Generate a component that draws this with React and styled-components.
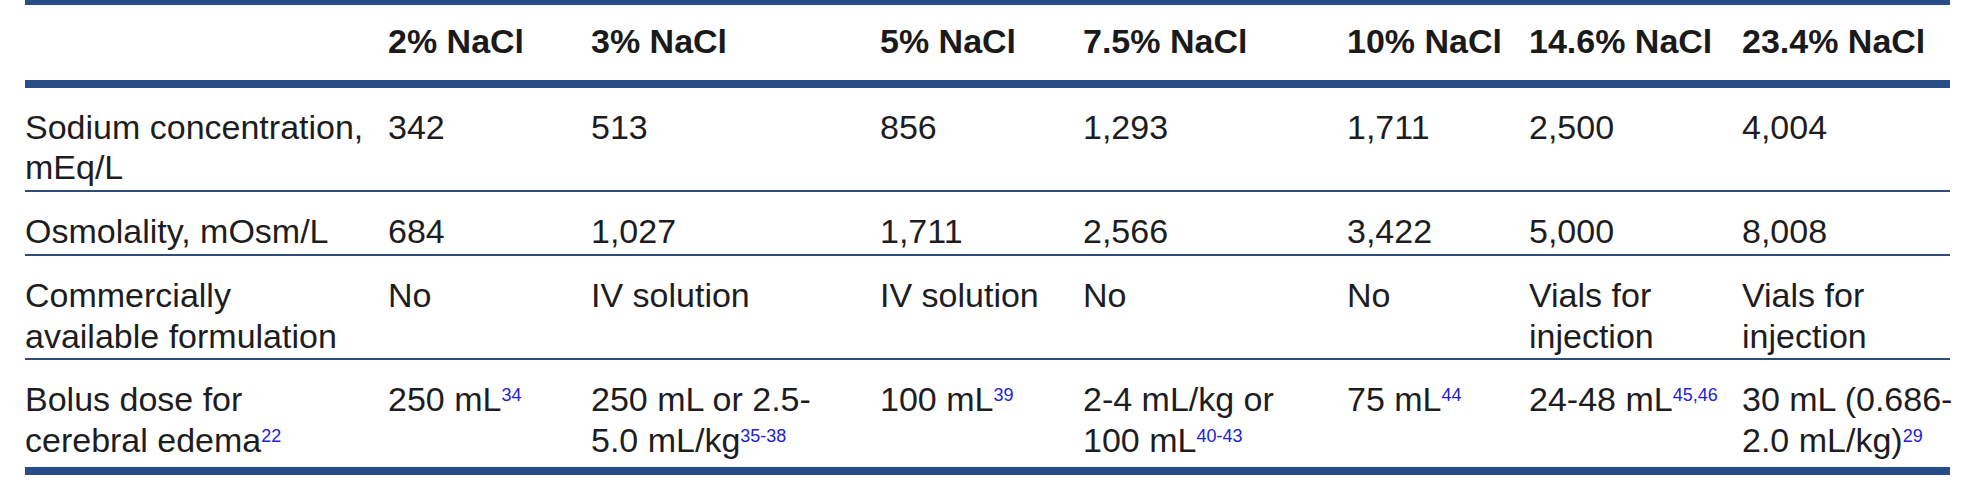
import React from "react";
import styled, { createGlobalStyle } from "styled-components";

const GlobalStyle = createGlobalStyle`
  body {
    margin: 0;
    background: #ffffff;
    font-family: "Liberation Sans", Arial, sans-serif;
    color: #1d1d1f;
  }
`;

const COLUMNS = "363px 203px 289px 203px 264px 182px 213px 208px";

const Table = styled.div`
  width: 1925px;
  margin-left: 25px;
  border-top: 5px solid #284c86;
`;

const Row = styled.div`
  display: grid;
  grid-template-columns: ${COLUMNS};
  border-bottom: ${(p) => (p.$thick ? "8px solid #284c86" : "2px solid #2e4c78")};
`;

const HeadCell = styled.div`
  padding: 16px 0 18px;
  font-size: 34px;
  line-height: 40.7px;
  font-weight: 700;
  color: #1a1a1a;
  white-space: nowrap;
`;

const Cell = styled.div`
  padding: 19px 0 ${(p) => (p.$last ? "6px" : "2px")};
  font-size: 34px;
  line-height: 40.7px;
  white-space: nowrap;
`;

const Ref = styled.sup`
  font-size: 18px;
  line-height: 0;
  vertical-align: 10px;
  color: #2222d2;
`;

const headers = [
  "",
  "2% NaCl",
  "3% NaCl",
  "5% NaCl",
  "7.5% NaCl",
  "10% NaCl",
  "14.6% NaCl",
  "23.4% NaCl"
];

const rows = [
  [
    <>
      Sodium concentration,
      <br />
      mEq/L
    </>,
    "342",
    "513",
    "856",
    "1,293",
    "1,711",
    "2,500",
    "4,004"
  ],
  ["Osmolality, mOsm/L", "684", "1,027", "1,711", "2,566", "3,422", "5,000", "8,008"],
  [
    <>
      Commercially
      <br />
      available formulation
    </>,
    "No",
    "IV solution",
    "IV solution",
    "No",
    "No",
    <>
      Vials for
      <br />
      injection
    </>,
    <>
      Vials for
      <br />
      injection
    </>
  ],
  [
    <>
      Bolus dose for
      <br />
      cerebral edema<Ref>22</Ref>
    </>,
    <>
      250 mL<Ref>34</Ref>
    </>,
    <>
      250 mL or 2.5-
      <br />
      5.0 mL/kg<Ref>35-38</Ref>
    </>,
    <>
      100 mL<Ref>39</Ref>
    </>,
    <>
      2-4 mL/kg or
      <br />
      100 mL<Ref>40-43</Ref>
    </>,
    <>
      75 mL<Ref>44</Ref>
    </>,
    <>
      24-48 mL<Ref>45,46</Ref>
    </>,
    <>
      30 mL (0.686-
      <br />
      2.0 mL/kg)<Ref>29</Ref>
    </>
  ]
];

const App = () => (
  <>
    <GlobalStyle />
    <Table>
      <Row $thick>
        {headers.map((h, i) => (
          <HeadCell key={i}>{h}</HeadCell>
        ))}
      </Row>
      {rows.map((cells, r) => {
        const last = r === rows.length - 1;
        return (
          <Row key={r} $thick={last}>
            {cells.map((c, i) => (
              <Cell key={i} $last={last}>
                {c}
              </Cell>
            ))}
          </Row>
        );
      })}
    </Table>
  </>
);

export default App;
